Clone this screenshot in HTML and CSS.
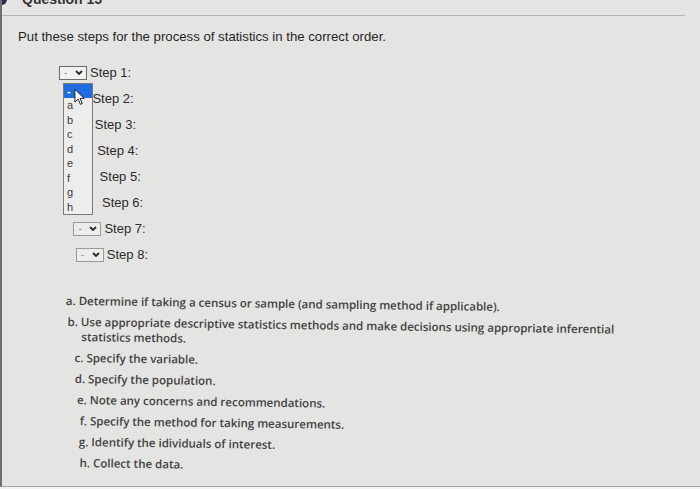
FILE: index.html
```html
<!DOCTYPE html>
<html>
<head>
<meta charset="utf-8">
<link rel="stylesheet" href="styles.css">
</head>
<body>
<div class="page">
  <div class="header">
    <span class="bullet"></span>
    <span class="qtitle">Question 15</span>
  </div>
  <div class="content">
    <p class="prompt">Put these steps for the process of statistics in the correct order.</p>
    <div class="steps">
      <div class="step-row">
        <div class="select focused">
          <span class="dash">-</span>
          <svg class="chev" viewBox="0 0 8 5" width="8" height="5"><polyline points="1,1 4,4 7,1"/></svg>
          <ul class="options">
            <li class="sel">-</li>
            <li>a</li><li>b</li><li>c</li><li>d</li><li>e</li><li>f</li><li>g</li><li>h</li>
          </ul>
          <svg class="cursor" viewBox="0 0 12 19" width="11" height="18"><path d="M1,1 L1,15 L4.5,11.8 L7,17.5 L9,16.6 L6.6,11 L11,11 Z"/></svg>
        </div>
        <span class="label">Step 1:</span>
      </div>
      <div class="step-row">
        <div class="select covered"><span class="dash">-</span><svg class="chev" viewBox="0 0 8 5" width="8" height="5"><polyline points="1,1 4,4 7,1"/></svg></div>
        <span class="label">Step 2:</span>
      </div>
      <div class="step-row">
        <div class="select covered"><span class="dash">-</span><svg class="chev" viewBox="0 0 8 5" width="8" height="5"><polyline points="1,1 4,4 7,1"/></svg></div>
        <span class="label">Step 3:</span>
      </div>
      <div class="step-row">
        <div class="select covered"><span class="dash">-</span><svg class="chev" viewBox="0 0 8 5" width="8" height="5"><polyline points="1,1 4,4 7,1"/></svg></div>
        <span class="label">Step 4:</span>
      </div>
      <div class="step-row">
        <div class="select covered"><span class="dash">-</span><svg class="chev" viewBox="0 0 8 5" width="8" height="5"><polyline points="1,1 4,4 7,1"/></svg></div>
        <span class="label">Step 5:</span>
      </div>
      <div class="step-row">
        <div class="select covered"><span class="dash">-</span><svg class="chev" viewBox="0 0 8 5" width="8" height="5"><polyline points="1,1 4,4 7,1"/></svg></div>
        <span class="label">Step 6:</span>
      </div>
      <div class="step-row">
        <div class="select"><span class="dash">-</span><svg class="chev" viewBox="0 0 8 5" width="8" height="5"><polyline points="1,1 4,4 7,1"/></svg></div>
        <span class="label">Step 7:</span>
      </div>
      <div class="step-row">
        <div class="select"><span class="dash">-</span><svg class="chev" viewBox="0 0 8 5" width="8" height="5"><polyline points="1,1 4,4 7,1"/></svg></div>
        <span class="label">Step 8:</span>
      </div>
    </div>
    <ul class="answers">
      <li>a. Determine if taking a census or sample (and sampling method if applicable).</li>
      <li class="wrap">b. Use appropriate descriptive statistics methods and make decisions using appropriate inferential statistics methods.</li>
      <li>c. Specify the variable.</li>
      <li>d. Specify the population.</li>
      <li>e. Note any concerns and recommendations.</li>
      <li>f. Specify the method for taking measurements.</li>
      <li>g. Identify the idividuals of interest.</li>
      <li>h. Collect the data.</li>
    </ul>
  </div>
</div>
</body>
</html>
```
FILE: styles.css
```css
html, body {
  margin: 0;
  padding: 0;
}
body {
  background: #f2f2f2;
  width: 700px;
  height: 489px;
  overflow: hidden;
}
.page {
  height: 487px;
  background: #e4e4e2;
  border-left: 2px solid #6e6e6e;
  border-bottom: 1px solid #a8a8a8;
  box-sizing: border-box;
  overflow: hidden;
}
.header {
  width: 683px;
  height: 15px;
  border-bottom: 1px solid #b4b4b4;
  display: flex;
  align-items: flex-end;
  overflow: hidden;
  position: relative;
}
.bullet {
  position: absolute;
  left: -6px;
  top: -6px;
  width: 11px;
  height: 11px;
  border-radius: 50%;
  background: #2b3048;
}
.qtitle {
  font-family: "Liberation Sans", Arial, sans-serif;
  font-size: 14px;
  font-weight: bold;
  color: #333;
  line-height: 14px;
  margin: 0 0 9px 20px;
}
.content {
  font-family: "Liberation Sans", Arial, sans-serif;
}
.prompt {
  margin: 13px 0 0 16px;
  font-size: 13.2px;
  line-height: 16px;
  color: #262626;
}
.steps {
  margin-top: 20px;
  display: flex;
  flex-direction: column;
  gap: 11px;
}
.step-row {
  display: flex;
  align-items: center;
  gap: 3px;
  height: 15px;
  margin-left: 57px;
}
.step-row:nth-child(2) { margin-left: 59.4px; }
.step-row:nth-child(3) { margin-left: 61.8px; }
.step-row:nth-child(4) { margin-left: 64.2px; }
.step-row:nth-child(5) { margin-left: 66.6px; }
.step-row:nth-child(6) { margin-left: 69px; }
.step-row:nth-child(7) { margin-left: 71.4px; }
.step-row:nth-child(8) { margin-left: 73.8px; }
.select {
  position: relative;
  width: 28px;
  height: 14px;
  box-sizing: border-box;
  border: 1px solid #9a9a9a;
  background: #ececec;
  display: flex;
  align-items: center;
  justify-content: space-between;
  padding: 0 3px 0 4px;
}
.select.focused {
  border-color: #6a6a6a;
  background: #f1f1f1;
}
.select.covered {
  visibility: hidden;
}
.dash {
  font-size: 10px;
  color: #8a8a8a;
  line-height: 10px;
}
.chev polyline {
  fill: none;
  stroke: #2a2a2a;
  stroke-width: 1.8;
}
.label {
  font-size: 13px;
  color: #2b2b2b;
  line-height: 15px;
}
.options {
  visibility: visible;
  position: absolute;
  top: 16px;
  left: 3px;
  width: 30px;
  box-sizing: border-box;
  margin: 0;
  padding: 0;
  list-style: none;
  border: 1px solid #7a7a7a;
  background: #ededeb;
  z-index: 2;
}
.options li {
  height: 14.5px;
  line-height: 14.5px;
  padding-left: 3px;
  font-size: 11px;
  color: #3a3a3a;
}
.options li.sel {
  background: #1f6be0;
  color: #ffffff;
  font-weight: bold;
}
.cursor {
  position: absolute;
  left: 14px;
  top: 21px;
  z-index: 3;
}
.cursor path {
  fill: #ffffff;
  stroke: #111;
  stroke-width: 1;
  stroke-linejoin: round;
}
.answers {
  margin: 30px 0 0 0;
  padding: 0;
  list-style: none;
  display: flex;
  flex-direction: column;
  gap: 6px;
  font-family: "Open Sans", sans-serif;
  font-weight: 600;
  font-size: 11.5px;
  line-height: 15px;
  color: #414141;
  transform-origin: 0 0;
  transform: rotate(0.8deg);
}
.answers li { margin-left: 64px; }
.answers li:nth-child(2) { margin-left: 66px; }
.answers li:nth-child(3) { margin-left: 73.5px; }
.answers li:nth-child(4) { margin-left: 74px; }
.answers li:nth-child(5) { margin-left: 76.5px; }
.answers li:nth-child(6) { margin-left: 79.5px; }
.answers li:nth-child(7) { margin-left: 79px; }
.answers li:nth-child(8) { margin-left: 80px; }
.answers li.wrap {
  width: 575px;
  padding-left: 14px;
  text-indent: -14px;
}
```
